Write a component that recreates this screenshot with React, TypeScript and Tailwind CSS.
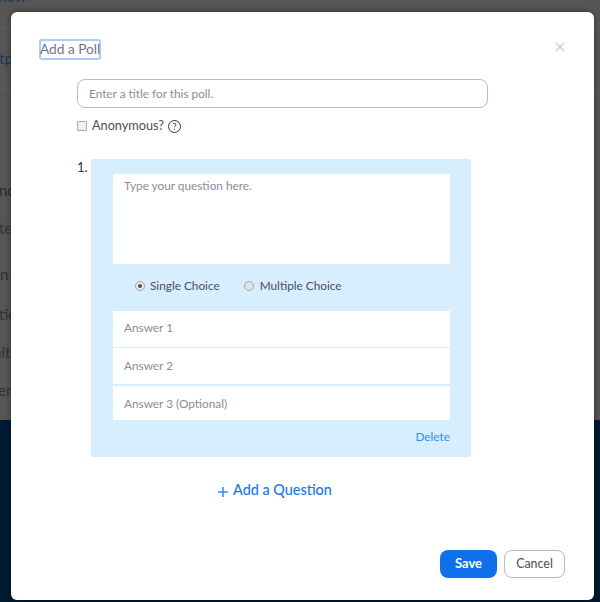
const answers = ["Answer 1", "Answer 2", "Answer 3 (Optional)"];

const App = () => {
  return (
    <div className="relative h-[602px] w-[600px] overflow-hidden bg-[#565656] font-['Lato','Open_Sans',sans-serif]">
      {/* page behind the overlay */}
      <div className="flex h-[420px] flex-col text-[15px] leading-[20px] text-[#333]">
        <div className="h-[29px] border-b border-[#5f5f5f]">
          <span className="-mt-[14px] -ml-[2px] block text-[#1d3a5e]">now</span>
        </div>
        <div className="h-[61px] border-b border-[#5f5f5f] pt-[19px] text-[#1d3a5e]">
          <span className="-ml-[1px] block">tp</span>
        </div>
        <div className="flex flex-col pt-[90px] whitespace-nowrap">
          <span className="-ml-[1px] h-[38px] text-[#33262f]">nc</span>
          <span className="-ml-[1px] h-[46px]">te</span>
          <span className="h-[40px] text-[#26303c]">n</span>
          <span className="-ml-[1px] h-[38px]">tic</span>
          <span className="-ml-[6px] h-[38px]">ait</span>
          <span className="-ml-[2px] h-[20px]">er</span>
        </div>
      </div>
      <div className="h-[182px] bg-[#001a33]" />

      {/* modal */}
      <div className="absolute top-[12px] left-[11px] flex h-[588px] w-[583px] flex-col rounded-[6px] bg-white pt-[27px] pr-[28px] pb-[22px] pl-[28px] shadow-[0_0_6px_rgba(0,0,0,0.45)]">
        <div className="flex items-start justify-between">
          <h2 className="box-border h-[21px] w-[62px] rounded-[3px] border-2 border-[#a9cbff] indent-[-1px] text-[13.7px] leading-[15px] font-normal whitespace-nowrap text-[#747487]">
            Add a Poll
          </h2>
          <svg width="10" height="10" viewBox="0 0 10 10" className="mt-[3px] mr-[1px] text-[#c9c9cf]">
            <path d="M1 1l8 8M9 1l-8 8" stroke="currentColor" strokeWidth="1.4" fill="none" />
          </svg>
        </div>

        <div className="mt-[19px] ml-[38px] flex w-[411px] flex-col">
          <input
            placeholder="Enter a title for this poll."
            className="h-[29px] w-full rounded-[8px] border border-[#bab7c9] bg-white px-[11px] text-[11.8px] outline-none placeholder:text-[#8b8b9b]"
          />
          <label className="mt-[9px] flex h-[18px] items-center text-[12.7px] text-[#4d4d5e]">
            <span className="h-[10px] w-[10px] rounded-[1px] border border-[#a9a9a9] bg-[#efefef]" />
            <span className="ml-[5px]">Anonymous?</span>
            <span className="ml-[4px] flex h-[13px] w-[13px] items-center justify-center rounded-full border border-[#333] text-[9px] leading-none text-[#333]">
              ?
            </span>
          </label>
        </div>

        <div className="mt-[24px] ml-[38px] flex items-start">
          <span className="w-[14px] shrink-0 text-[13px] leading-[16px] text-[#333]">1.</span>
          <div className="flex w-[380px] flex-col rounded-[2px] bg-[#d6eeff] pt-[15px] pr-[21px] pb-[12px] pl-[22px]">
            <textarea
              placeholder="Type your question here."
              className="h-[90px] w-full resize-none bg-white px-[11px] py-[3px] text-[11.8px] leading-[18px] outline-none placeholder:text-[#8b8b9b]"
            />
            <div className="flex h-[47px] items-center pb-[4px] pl-[22px] text-[11.8px] text-[#4d4d5e]">
              <span className="flex h-[10px] w-[10px] items-center justify-center rounded-full border border-[#a3a3a3] bg-[#ececec]">
                <span className="h-[4px] w-[4px] rounded-full bg-[#4d4d4d]" />
              </span>
              <span className="ml-[5px]">Single Choice</span>
              <span className="ml-[24px] h-[10px] w-[10px] rounded-full border border-[#a3a3a3] bg-[#e3e3e3]" />
              <span className="ml-[6px]">Multiple Choice</span>
            </div>
            <div className="flex flex-col gap-px">
              {answers.map((answer, i) => (
                <input
                  key={answer}
                  placeholder={answer}
                  className={`w-full bg-white px-[11px] text-[11.8px] outline-none placeholder:text-[#8b8b9b] ${
                    i === 0 ? "h-[36px] pb-[4px]" : i === 1 ? "h-[36px] pb-[2px]" : "mt-px h-[34px]"
                  }`}
                />
              ))}
            </div>
            <div className="mt-[9px] text-right text-[11.8px] leading-[16px] text-[#2d8cff]">Delete</div>
          </div>
        </div>

        <div className="mt-[24px] ml-[179px] flex items-center text-[14.4px] leading-[18px] font-medium text-[#2176e6]">
          <svg width="10" height="10" viewBox="0 0 10 10" className="mt-[3px] text-[#2d8cff]">
            <path d="M5 0v10M0 5h10" stroke="currentColor" strokeWidth="1.5" fill="none" />
          </svg>
          <span className="ml-[5px]">Add a Question</span>
        </div>

        <div className="mt-auto flex justify-end gap-[7px] pr-px">
          <button className="h-[28px] w-[57px] rounded-[8px] bg-[#0e71eb] text-[13px] font-bold text-white">Save</button>
          <button className="h-[28px] w-[61px] rounded-[8px] border border-[#bab7c9] bg-white text-[12.4px] text-[#4d4d5e]">
            Cancel
          </button>
        </div>
      </div>
    </div>
  );
};

export default App;
